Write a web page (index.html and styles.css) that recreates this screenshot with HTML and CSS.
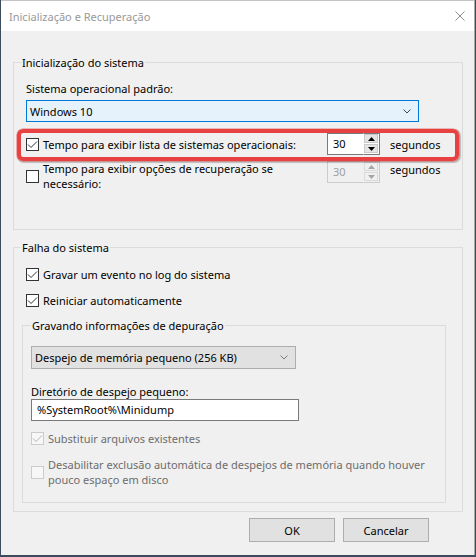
FILE: index.html
```html
<!DOCTYPE html>
<html lang="pt-BR">
<head>
<meta charset="utf-8">
<title>Inicialização e Recuperação</title>
<link rel="stylesheet" href="styles.css">
</head>
<body>
<div class="window">
  <div class="titlebar">
    <span class="title">Inicialização e Recuperação</span>
    <svg class="close" width="10" height="10" viewBox="0 0 10 10"><path d="M0.5 0.5L9.5 9.5M9.5 0.5L0.5 9.5" stroke="#8c8c8c" stroke-width="1" fill="none"/></svg>
  </div>
  <div class="content">
    <fieldset class="group group-startup">
      <legend>Inicialização do sistema</legend>
      <div class="line first-line">Sistema operacional padrão:</div>
      <div class="select select-os">
        <span>Windows 10</span>
        <svg width="8" height="5" viewBox="0 0 8 5"><path d="M0.5 0.5L4 4L7.5 0.5" stroke="#444" fill="none"/></svg>
      </div>
      <div class="spin-row row-list">
        <div class="check">
          <span class="box"><svg width="11" height="11" viewBox="0 0 11 11"><path d="M1 5.5L4 8.5L10 2.5" stroke="#333" fill="none"/></svg></span>
          <span class="text">Tempo para exibir lista de sistemas operacionais:</span>
        </div>
        <div class="spin">
          <span class="spin-field">30</span>
          <span class="spin-buttons">
            <span class="spin-btn"><svg width="7" height="4" viewBox="0 0 7 4"><path d="M0 4L3.5 0L7 4Z" fill="#000"/></svg></span>
            <span class="spin-btn"><svg width="7" height="4" viewBox="0 0 7 4"><path d="M0 0L3.5 4L7 0Z" fill="#000"/></svg></span>
          </span>
        </div>
        <span class="unit">segundos</span>
        <div class="highlight"></div>
      </div>
      <div class="spin-row row-recovery">
        <div class="check">
          <span class="box"></span>
          <span class="text text-narrow">Tempo para exibir opções de recuperação se necessário:</span>
        </div>
        <div class="spin spin-disabled">
          <span class="spin-field">30</span>
          <span class="spin-buttons">
            <span class="spin-btn"><svg width="7" height="4" viewBox="0 0 7 4"><path d="M0 4L3.5 0L7 4Z" fill="#a6a6a6"/></svg></span>
            <span class="spin-btn"><svg width="7" height="4" viewBox="0 0 7 4"><path d="M0 0L3.5 4L7 0Z" fill="#a6a6a6"/></svg></span>
          </span>
        </div>
        <span class="unit unit-low">segundos</span>
      </div>
    </fieldset>

    <fieldset class="group group-failure">
      <legend>Falha do sistema</legend>
      <div class="check check-event">
        <span class="box"><svg width="11" height="11" viewBox="0 0 11 11"><path d="M1 5.5L4 8.5L10 2.5" stroke="#333" fill="none"/></svg></span>
        <span class="text">Gravar um evento no log do sistema</span>
      </div>
      <div class="check check-restart">
        <span class="box"><svg width="11" height="11" viewBox="0 0 11 11"><path d="M1 5.5L4 8.5L10 2.5" stroke="#333" fill="none"/></svg></span>
        <span class="text">Reiniciar automaticamente</span>
      </div>

      <fieldset class="group group-debug">
        <legend>Gravando informações de depuração</legend>
        <div class="select select-dump">
          <span>Despejo de memória pequeno (256 KB)</span>
          <svg width="8" height="5" viewBox="0 0 8 5"><path d="M0.5 0.5L4 4L7.5 0.5" stroke="#7a7a7a" fill="none"/></svg>
        </div>
        <div class="line dir-label">Diretório de despejo pequeno:</div>
        <div class="input">%SystemRoot%\Minidump</div>
        <div class="check check-disabled check-overwrite">
          <span class="box"><svg width="11" height="11" viewBox="0 0 11 11"><path d="M1 5.5L4 8.5L10 2.5" stroke="#b4b4b4" fill="none"/></svg></span>
          <span class="text">Substituir arquivos existentes</span>
        </div>
        <div class="check check-disabled check-lowspace">
          <span class="box"></span>
          <span class="text text-wide">Desabilitar exclusão automática de despejos de memória quando houver pouco espaço em disco</span>
        </div>
      </fieldset>
    </fieldset>

    <div class="buttons">
      <button class="btn" type="button">OK</button>
      <button class="btn" type="button">Cancelar</button>
    </div>
  </div>
</div>
</body>
</html>
```

FILE: styles.css
```css
* { box-sizing: border-box; }

html, body {
  margin: 0;
  padding: 0;
}

body {
  width: 476px;
  height: 557px;
  overflow: hidden;
  background: #3d4c5d;
  font-family: "Noto Sans", "Segoe UI", sans-serif;
  font-size: 11px;
  line-height: 15px;
  color: #000;
}

.window {
  margin-left: 1px;
  width: 474px;
  height: 555px;
  background: #f0f0f0;
  border-right: 1px solid #a9a9a9;
  display: flex;
  flex-direction: column;
}

.titlebar {
  height: 31px;
  flex: none;
  background: #fff;
  border-top: 1px solid #c4c4c4;
  display: flex;
  align-items: center;
  justify-content: space-between;
  padding: 0 9px 0 8px;
}

.title {
  color: #999;
  font-size: 11px;
}

.close { display: block; }

.content {
  flex: 1;
  padding: 24px 11px 0 12px;
  display: flex;
  flex-direction: column;
}

.group {
  margin: 0;
  min-width: 0;
  border: 1px solid #dcdcdc;
}

.group > legend {
  padding: 0 1px;
  line-height: 15px;
}

/* Group 1 */
.group-startup {
  padding: 11px 12px 38px 12px;
}

.group-startup > legend { margin-left: -5px; }

.line { height: 15px; white-space: nowrap; }

.select {
  display: flex;
  align-items: center;
  justify-content: space-between;
  padding: 0 7px 0 3px;
  white-space: nowrap;
}

.select svg { display: block; }

.select-os {
  margin-top: 4px;
  width: 393px;
  height: 22px;
  background: #e5f1fb;
  border: 1px solid #0078d7;
}

.spin-row {
  display: grid;
  grid-template-columns: 301px 53px auto;
}

.row-list {
  position: relative;
  margin-top: 11px;
  height: 22px;
  align-items: center;
}

.row-recovery {
  margin-top: 6px;
  align-items: start;
}

.check {
  display: flex;
  align-items: center;
  gap: 4px;
}

.box {
  flex: none;
  width: 13px;
  height: 13px;
  border: 1px solid #333;
  background: #fff;
}

.box svg { display: block; }

.text-narrow { max-width: 250px; }

.spin {
  display: flex;
  height: 22px;
}

.spin-field {
  width: 36px;
  border: 1px solid #7a7a7a;
  border-right: none;
  background: #fff;
  padding-left: 5px;
  line-height: 19px;
}

.spin-buttons {
  width: 17px;
  border: 1px solid #7a7a7a;
  border-left: 1px solid #fff;
  background: #fff;
  padding: 0 1px 1px 0;
  display: flex;
  flex-direction: column;
  gap: 1px;
}

.spin-btn {
  flex: 1;
  background: #e5e5e5;
  border: 1px solid #c9c9c9;
  display: flex;
  align-items: center;
  justify-content: center;
}

.spin-btn svg { display: block; }

.spin-disabled .spin-field {
  color: #a0a0a0;
  background: #f0f0f0;
  border-color: #cccccc;
}

.spin-disabled .spin-buttons {
  background: #f0f0f0;
  border-color: #cccccc;
  border-left-color: #f0f0f0;
}

.spin-disabled .spin-btn {
  background: #f0f0f0;
  border-color: #dadada;
}

.unit {
  margin-left: 10px;
  white-space: nowrap;
}

.unit-low { padding-top: 1px; }

/* annotation overlay drawn over the first row */
.highlight {
  position: absolute;
  left: -9px;
  top: -4px;
  width: 442px;
  height: 32px;
  border: 4px solid #e84141;
  border-radius: 6px;
  box-shadow: 0 0 0 0.6px rgba(232, 65, 65, 0.6), 1px 1px 1px 1px rgba(0, 0, 0, 0.22);
  pointer-events: none;
}

/* Group 2 */
.group-failure {
  margin-top: 10px;
  padding: 12px 16px 8px 8px;
}

.group-failure > legend { margin-left: -1px; }

.check-event { margin-left: 4px; }

.check-restart {
  margin-left: 4px;
  margin-top: 11px;
}

.group-debug {
  margin-top: 10px;
  padding: 13px 8px 15px 8px;
}

.group-debug > legend { margin-left: 0; }

.select-dump {
  width: 265px;
  height: 23px;
  background: #e1e1e1;
  border: 1px solid #adadad;
}

.dir-label { margin-top: 15px; }

.input {
  width: 268px;
  height: 22px;
  background: #fff;
  border: 1px solid #7a7a7a;
  padding-left: 5px;
  line-height: 20px;
  white-space: nowrap;
}

.check-overwrite { margin-top: 10px; }

.check-lowspace { margin-top: 11px; }

.check-disabled { color: #6d6d6d; }

.check-disabled .box {
  border-color: #cccccc;
  background: #f7f7f7;
}

.text-wide { max-width: 392px; }

/* Buttons */
.buttons {
  margin-top: 6px;
  display: flex;
  justify-content: flex-end;
  gap: 8px;
  padding-right: 34px;
}

.btn {
  width: 86px;
  height: 24px;
  margin: 0;
  padding: 0;
  background: #e1e1e1;
  border: 1px solid #adadad;
  border-radius: 0;
  font-family: inherit;
  font-size: 11px;
  line-height: 15px;
  color: #000;
}
```
